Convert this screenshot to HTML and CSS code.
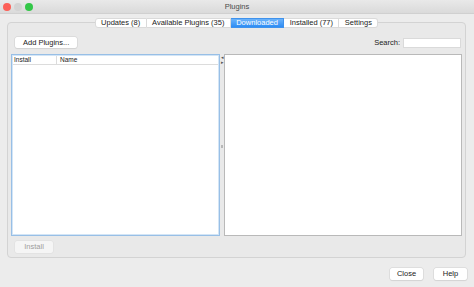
FILE: index.html
```html
<!DOCTYPE html>
<html lang="en">
<head>
  <meta charset="UTF-8">
  <title>Plugins</title>
  <link rel="stylesheet" href="styles.css">
</head>
<body>
  <div class="window">
    <div class="titlebar">
      <div class="lights">
        <span class="light close"></span>
        <span class="light min"></span>
        <span class="light zoom"></span>
      </div>
      <div class="title">Plugins</div>
    </div>

    <div class="tabpanel">
      <div class="tabs">
        <span class="tab">Updates (8)</span>
        <span class="tab">Available Plugins (35)</span>
        <span class="tab selected">Downloaded</span>
        <span class="tab">Installed (77)</span>
        <span class="tab">Settings</span>
      </div>

      <div class="toolbar">
        <button class="btn">Add Plugins...</button>
        <div class="search">
          <label>Search:</label>
          <span class="search-field"></span>
        </div>
      </div>

      <div class="split">
        <div class="list">
          <div class="list-head">
            <span class="col col-install">Install</span>
            <span class="col col-name">Name</span>
          </div>
        </div>
        <div class="divider">
          <span class="arrow">&#9666;</span>
          <span class="arrow">&#9656;</span>
          <span class="grip"></span>
        </div>
        <div class="details"></div>
      </div>

      <div class="actions">
        <button class="btn disabled">Install</button>
      </div>
    </div>

    <div class="footer">
      <button class="btn wide">Close</button>
      <button class="btn wide">Help</button>
    </div>
  </div>
</body>
</html>
```

FILE: styles.css
```css
* {
  box-sizing: border-box;
}

body {
  margin: 0;
  width: 474px;
  height: 287px;
  background: #ececec;
  font-family: "Liberation Sans", Arial, sans-serif;
  font-size: 7.5px;
  color: #222;
  overflow: hidden;
}

.window {
  display: flex;
  flex-direction: column;
  height: 287px;
}

/* 标题栏 */
.titlebar {
  height: 14px;
  display: flex;
  align-items: center;
  background: linear-gradient(#e9e9e9, #dadada);
  border-bottom: 1px solid #d0d0d0;
}

.lights {
  display: flex;
  gap: 3px;
  padding-left: 3px;
}

.light {
  width: 8px;
  height: 8px;
  border-radius: 50%;
}

.light.close { background: #fc5f57; }
.light.min { background: #d3d3d3; }
.light.zoom { background: #33c748; }

.title {
  flex: 1;
  text-align: center;
  margin-right: 33px;
  color: #4a4a4a;
  font-size: 7.5px;
}

/* 标签面板 */
.tabpanel {
  margin: 8px 8px 0 7px;
  height: 236px;
  border: 1px solid #d3d3d3;
  border-radius: 4px;
  background: #e9e9e9;
  padding: 0 3px;
  display: flex;
  flex-direction: column;
}

.tabs {
  display: flex;
  justify-content: center;
  height: 10px;
  margin-top: -5px;
}

.tab {
  display: flex;
  align-items: center;
  padding: 0 5.4px;
  background: #fff;
  border: 1px solid #dadada;
  border-left: none;
  color: #222;
  line-height: 1;
}

.tab:first-child {
  border-left: 1px solid #dadada;
  border-radius: 3px 0 0 3px;
}

.tab:last-child {
  border-radius: 0 3px 3px 0;
}

.tab.selected {
  background: linear-gradient(#6cb3fa, #2d8cf4);
  border-color: #3f92ec;
  color: #fff;
}

.toolbar {
  display: flex;
  justify-content: space-between;
  align-items: center;
  margin-top: 9px;
  height: 11px;
  padding: 0 1px 0 4px;
}

.btn {
  font-family: inherit;
  font-size: 7.5px;
  height: 11px;
  padding: 0 8px;
  border: none;
  border-radius: 2px;
  background: #fff;
  color: #222;
  box-shadow: 0 0 0 0.5px #cfcfcf, 0 1px 1px rgba(0,0,0,0.08);
  line-height: 1;
}

.btn.disabled {
  background: #f5f5f5;
  color: #9d9d9d;
  box-shadow: 0 0 0 0.5px #dedede;
  width: 38px;
  height: 12px;
  padding: 0;
}

.btn.wide {
  width: 33px;
  height: 12px;
  padding: 0;
}

.search {
  display: flex;
  align-items: center;
  gap: 3px;
}

.search-field {
  width: 58px;
  height: 10px;
  background: #fff;
  border: 1px solid #dadada;
}

/* 分割面板 */
.split {
  display: flex;
  margin-top: 6px;
  height: 182px;
}

.list {
  width: 209px;
  background: #fff;
  border: 1px solid #98bfe6;
  box-shadow: inset 0 0 0 1px #d3e5f6;
}

.list-head {
  display: flex;
  height: 9px;
  margin: 1px;
  border-bottom: 1px solid #dcdcdc;
  font-size: 6.5px;
  line-height: 8px;
}

.col {
  padding-left: 1px;
}

.col-install {
  width: 44px;
  border-right: 1px solid #dcdcdc;
}

.col-name {
  padding-left: 3px;
}

.divider {
  width: 4px;
  display: flex;
  flex-direction: column;
  align-items: center;
  font-size: 5px;
  line-height: 5px;
  color: #555;
  padding-top: 1px;
}

.grip {
  width: 2px;
  height: 3px;
  margin-top: 80px;
  background: #b8b8b8;
}

.details {
  flex: 1;
  background: #fff;
  border: 1px solid #b9b9b9;
}

.actions {
  margin-top: 5px;
  padding-left: 4px;
}

.footer {
  display: flex;
  justify-content: flex-end;
  gap: 11px;
  margin-top: 10px;
  padding-right: 7px;
}
```
